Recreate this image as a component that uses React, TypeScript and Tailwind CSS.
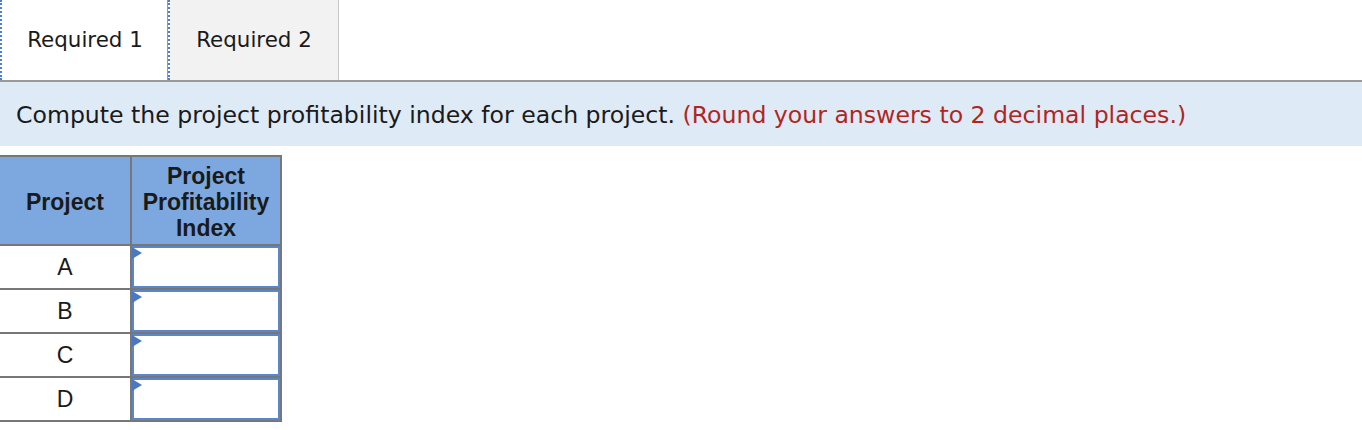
const rows = ["A", "B", "C", "D"];

function Marker() {
  return (
    <svg className="absolute left-0 top-[1px]" width="10" height="12" viewBox="0 0 10 12">
      <polygon points="0,0 10,6 0,12" fill="#4a78c4" />
    </svg>
  );
}

export default function App() {
  return (
    <div className="w-[1362px] h-[430px] bg-white overflow-hidden">
      {/* Tabs */}
      <div className="flex h-[82px] border-b-2 border-[#9a9a9a] font-['DejaVu_Sans',sans-serif] text-[21.4px] text-[#1a1a1a]">
        <div className="w-[170px] flex items-center justify-center bg-white border-x-2 border-dotted border-[#4f7fc8] shadow-[inset_-1px_0_0_#999]">
          Required 1
        </div>
        <div className="w-[169px] flex items-center justify-center bg-[#f2f2f2] border-r border-[#c6c6c6]">
          Required 2
        </div>
      </div>

      {/* Instruction banner */}
      <div className="h-[64px] flex items-center px-[16px] pt-[3px] bg-[#dfeaf7] font-['DejaVu_Sans',sans-serif] text-[23.6px] text-[#1a1a1a]">
        <span>
          Compute the project profitability index for each project.{" "}
          <span className="text-[#b0261f]">(Round your answers to 2 decimal places.)</span>
        </span>
      </div>

      {/* Table */}
      <div className="mt-[9px] w-[282px] border-t-2 border-r-2 border-[#777] font-['Liberation_Sans',Arial,sans-serif] text-[23px] text-[#1a1a1a]">
        <div className="flex h-[89px] border-b-2 border-[#777] bg-[#7ca8df] font-bold leading-[26px]">
          <div className="w-[132px] flex items-center justify-center pt-[2px] border-r-2 border-[#777]">Project</div>
          <div className="flex-1 flex items-center justify-center pt-[2px] text-center">
            Project
            <br />
            Profitability
            <br />
            Index
          </div>
        </div>
        {rows.map((r) => (
          <div key={r} className="flex h-[44px] border-b-2 border-[#777]">
            <div className="w-[132px] flex items-center justify-center border-r-2 border-[#777]">{r}</div>
            <div className="relative flex-1">
              <input
                type="text"
                className="w-full h-full border-2 border-[#5a87cc] bg-white outline-none"
              />
              <Marker />
            </div>
          </div>
        ))}
      </div>
    </div>
  );
}
